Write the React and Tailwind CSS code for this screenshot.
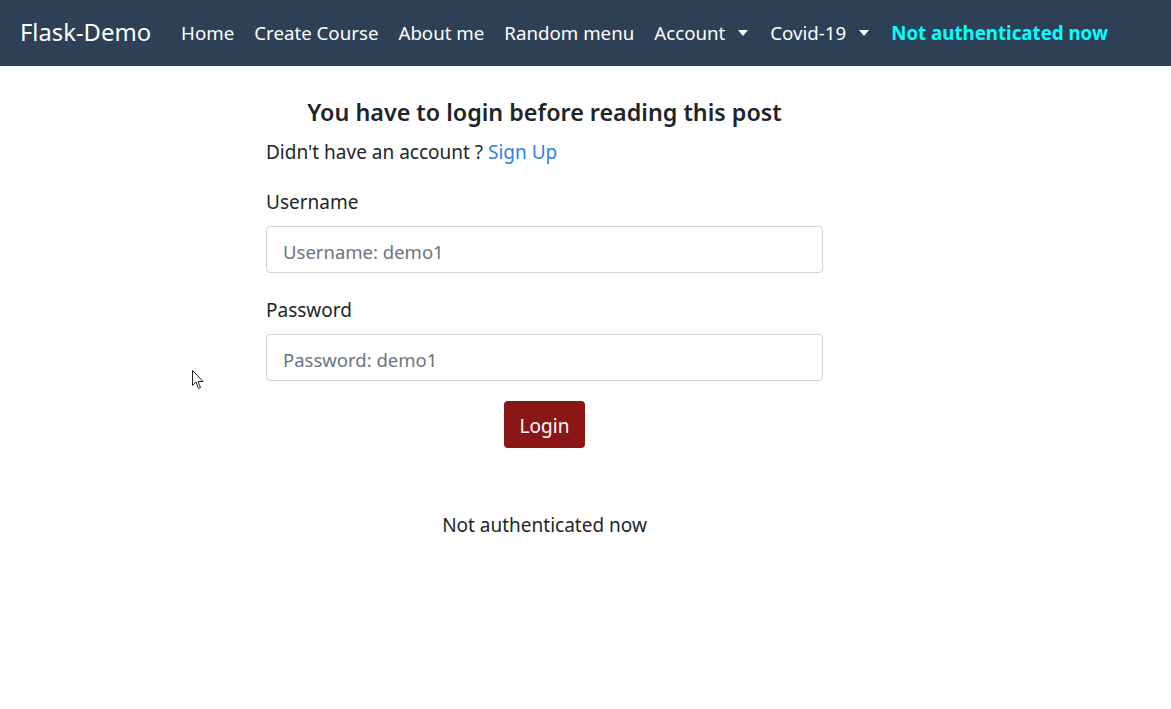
import React from 'react';

const navLinks = ['Home', 'Create Course', 'About me', 'Random menu'];
const dropdowns = ['Account', 'Covid-19'];

const Caret = () => (
  <span className="ml-[13px] inline-block w-0 h-0 border-l-[5.5px] border-r-[5.5px] border-t-[6px] border-l-transparent border-r-transparent border-t-white align-middle" />
);

const App = () => {
  return (
    <div className="min-h-[709px] bg-white relative" style={{ fontFamily: '"Noto Sans", "Open Sans", sans-serif' }}>
      {/* Navbar */}
      <nav className="h-[66px] bg-[#2e4056] flex items-center pl-[20px]">
        <span className="text-white text-[23.8px] mr-[21px]">Flask-Demo</span>
        <ul className="flex items-center gap-[2px]">
          {navLinks.map((l) => (
            <li key={l} className="px-[9px] text-white text-[18.7px]">{l}</li>
          ))}
          {dropdowns.map((d) => (
            <li key={d} className="pl-[9px] pr-[11px] text-white text-[18.7px] flex items-center">
              {d}
              <Caret />
            </li>
          ))}
          <li className="px-[9px] text-[#00ffff] text-[18.7px] font-bold">Not authenticated now</li>
        </ul>
      </nav>

      {/* Login form */}
      <main className="w-[557px] ml-[266px] text-[#212529] text-[19px]">
        <h4 className="text-center text-[23.3px] font-semibold mt-[30px] leading-[32px]">You have to login before reading this post</h4>
        <p className="mt-[11px] leading-[26px]">
          Didn't have an account ? <a className="text-[#2f80ed]" href="#">Sign Up</a>
        </p>

        <div className="mt-[24px]">
          <label className="block leading-[26px]">Username</label>
          <input
            className="mt-[11px] w-full h-[47px] border border-[#ced4da] rounded-[4px] px-[16px] pt-[3px] text-[18.5px] placeholder:text-[#6c757d] outline-none"
            placeholder="Username: demo1"
          />
        </div>

        <div className="mt-[24px]">
          <label className="block leading-[26px]">Password</label>
          <input
            type="password"
            className="mt-[11px] w-full h-[47px] border border-[#ced4da] rounded-[4px] px-[16px] pt-[3px] text-[18.5px] placeholder:text-[#6c757d] outline-none"
            placeholder="Password: demo1"
          />
        </div>

        <div className="flex justify-center mt-[20px]">
          <button className="w-[81px] h-[47px] pt-[3px] bg-[#8b1616] text-white rounded-[4px]">Login</button>
        </div>

        <p className="text-center mt-[64px] leading-[26px]">Not authenticated now</p>
      </main>

      {/* mouse pointer in the screenshot */}
      <svg className="absolute left-[192px] top-[370px]" width="13" height="20" viewBox="0 0 13 20">
        <path d="M0.5 0.5 L0.5 15.5 L4 12 L6.5 18.5 L8.5 17.5 L6 11.5 L11 11.5 Z" fill="white" stroke="#222" strokeWidth="1" />
      </svg>
    </div>
  );
};

export default App;
